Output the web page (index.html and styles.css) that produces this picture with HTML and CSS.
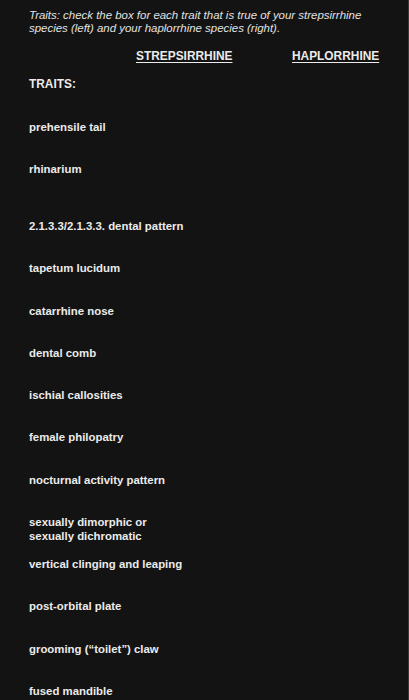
FILE: index.html
```html
<!DOCTYPE html>
<html lang="en">
<head>
<meta charset="utf-8">
<title>Traits</title>
<link rel="stylesheet" href="styles.css">
</head>
<body>
<div class="page">
  <p class="intro">Traits: check the box for each trait that is true of your strepsirrhine<br>species (left) and your haplorrhine species (right).</p>
  <div class="heads">
    <span></span>
    <span class="col-head">STREPSIRRHINE</span>
    <span class="col-head">HAPLORRHINE</span>
  </div>
  <div class="traits-label">TRAITS:</div>
  <ul class="traits">
    <li>prehensile tail</li>
    <li class="tall">rhinarium</li>
    <li>2.1.3.3/2.1.3.3. dental pattern</li>
    <li>tapetum lucidum</li>
    <li>catarrhine nose</li>
    <li>dental comb</li>
    <li>ischial callosities</li>
    <li>female philopatry</li>
    <li>nocturnal activity pattern</li>
    <li>sexually dimorphic or<br>sexually dichromatic</li>
    <li>vertical clinging and leaping</li>
    <li>post-orbital plate</li>
    <li>grooming (“toilet”) claw</li>
    <li>fused mandible</li>
  </ul>
</div>
</body>
</html>
```

FILE: styles.css
```css
html, body {
  margin: 0;
  padding: 0;
  background: #131313;
}

body {
  font-family: "Liberation Sans", Arial, sans-serif;
  color: #ebebeb;
  overflow: hidden;
}

.page {
  width: 409px;
  min-height: 700px;
  box-sizing: border-box;
  padding: 9px 0 0 29px;
  border-right: 1px solid #3a3a3a;
}

.intro {
  margin: 0;
  font-style: italic;
  font-size: 11.45px;
  line-height: 12.7px;
  color: #e2e2e2;
}

.heads {
  display: grid;
  grid-template-columns: 107px 156px auto;
  margin-top: 14.6px;
  font-weight: bold;
  font-size: 11.9px;
  line-height: 14px;
}

.col-head {
  text-decoration: underline;
  text-decoration-thickness: 1px;
  text-underline-offset: 2px;
}

.traits-label {
  margin-top: 14.3px;
  font-weight: bold;
  font-size: 11.9px;
  line-height: 14px;
}

.traits {
  list-style: none;
  margin: 28.8px 0 0;
  padding: 0;
  display: flex;
  flex-direction: column;
  font-weight: bold;
  font-size: 11.4px;
  line-height: 14px;
}

.traits li {
  height: 42.25px;
}

.traits li.tall {
  height: 56.7px;
}
```
